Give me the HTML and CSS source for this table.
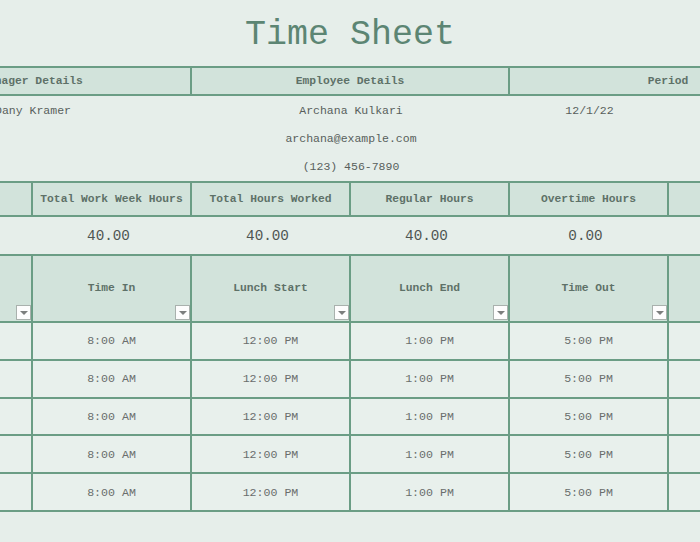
FILE: index.html
```html
<!DOCTYPE html>
<html lang="en">
<head>
<meta charset="utf-8">
<title>Time Sheet</title>
<link rel="stylesheet" href="styles.css">
</head>
<body>
<div class="page">
  <h1 class="title">Time Sheet</h1>
  <div class="sheet">
    <div class="row info-head">
      <div class="cell span2 hd">Manager Details</div>
      <div class="cell span2 hd">Employee Details</div>
      <div class="cell span2 hd last">Period</div>
    </div>
    <div class="row info">
      <div class="cell span2">Dany Kramer</div>
      <div class="cell span2">Archana Kulkari</div>
      <div class="cell">12/1/22</div>
      <div class="cell"></div>
    </div>
    <div class="row info">
      <div class="cell span2"></div>
      <div class="cell span2">archana@example.com</div>
      <div class="cell span2"></div>
    </div>
    <div class="row info">
      <div class="cell span2"></div>
      <div class="cell span2">(123) 456-7890</div>
      <div class="cell span2"></div>
    </div>
    <div class="row sum-head">
      <div class="cell hd"></div>
      <div class="cell hd">Total Work Week Hours</div>
      <div class="cell hd">Total Hours Worked</div>
      <div class="cell hd">Regular Hours</div>
      <div class="cell hd">Overtime Hours</div>
      <div class="cell hd last"></div>
    </div>
    <div class="row sum-vals">
      <div class="cell"></div>
      <div class="cell">40.00</div>
      <div class="cell">40.00</div>
      <div class="cell">40.00</div>
      <div class="cell">0.00</div>
      <div class="cell"></div>
    </div>
    <div class="row tbl-head">
      <div class="cell hd"><span class="dd"></span></div>
      <div class="cell hd">Time In<span class="dd"></span></div>
      <div class="cell hd">Lunch Start<span class="dd"></span></div>
      <div class="cell hd">Lunch End<span class="dd"></span></div>
      <div class="cell hd">Time Out<span class="dd"></span></div>
      <div class="cell hd"><span class="dd"></span></div>
    </div>
    <div class="row data"><div class="cell"></div><div class="cell">8:00 AM</div><div class="cell">12:00 PM</div><div class="cell">1:00 PM</div><div class="cell">5:00 PM</div><div class="cell"></div></div>
    <div class="row data"><div class="cell"></div><div class="cell">8:00 AM</div><div class="cell">12:00 PM</div><div class="cell">1:00 PM</div><div class="cell">5:00 PM</div><div class="cell"></div></div>
    <div class="row data"><div class="cell"></div><div class="cell">8:00 AM</div><div class="cell">12:00 PM</div><div class="cell">1:00 PM</div><div class="cell">5:00 PM</div><div class="cell"></div></div>
    <div class="row data"><div class="cell"></div><div class="cell">8:00 AM</div><div class="cell">12:00 PM</div><div class="cell">1:00 PM</div><div class="cell">5:00 PM</div><div class="cell"></div></div>
    <div class="row data"><div class="cell"></div><div class="cell">8:00 AM</div><div class="cell">12:00 PM</div><div class="cell">1:00 PM</div><div class="cell">5:00 PM</div><div class="cell"></div></div>
  </div>
</div>
</body>
</html>
```

FILE: styles.css
```css
* { box-sizing: border-box; }

html, body {
  margin: 0;
  padding: 0;
  background: #e6eeea;
  overflow: hidden;
}

.page {
  width: 700px;
  height: 542px;
  overflow: hidden;
  font-family: "Liberation Mono", "Courier New", monospace;
  color: #5f6b66;
}

.title {
  margin: 0;
  height: 66px;
  padding-top: 14px;
  text-align: center;
  font-weight: normal;
  font-size: 35px;
  line-height: 42px;
  color: #5c8573;
}

.sheet {
  margin-left: -126px;
  width: 954px;
}

.row {
  display: grid;
  grid-template-columns: repeat(6, 159px);
}

.cell {
  display: flex;
  align-items: center;
  justify-content: center;
  position: relative;
  white-space: nowrap;
  font-size: 11.5px;
}

.span2 { grid-column: span 2; }

.hd {
  background: #d2e3db;
  font-weight: bold;
  font-size: 11.3px;
  color: #5e7168;
  border-right: 2px solid #6b9d85;
}

/* info header */
.info-head {
  border-top: 2px solid #6b9d85;
  border-bottom: 2px solid #6b9d85;
}
.info-head .cell { height: 26px; }

.info .cell {
  height: 28.2px;
  color: #585f5c;
  padding-top: 1px;
}

/* summary header */
.sum-head {
  border-top: 2px solid #6b9d85;
  border-bottom: 2px solid #6b9d85;
}
.sum-head .cell { height: 32.5px; }

.sum-vals .cell {
  height: 37px;
  font-size: 14.3px;
  color: #4f5552;
  padding-right: 8px;
  padding-top: 1px;
}

/* time table */
.tbl-head {
  border-top: 2px solid #6b9d85;
  border-bottom: 2px solid #6b9d85;
}
.tbl-head .cell {
  height: 65px;
  padding-bottom: 2px;
}

.data {
  border-bottom: 2px solid #6b9d85;
}
.data .cell {
  height: 35.8px;
  background: #e8f0ec;
  border-right: 2px solid #6b9d85;
  color: #6a6e6c;
  font-size: 11.6px;
}

.dd {
  position: absolute;
  right: 0;
  bottom: 1px;
  width: 15px;
  height: 15px;
  background: #fdfdfd;
  border: 1px solid #a9b1ad;
}
.dd::after {
  content: "";
  position: absolute;
  left: 3px;
  top: 5px;
  border-left: 4px solid transparent;
  border-right: 4px solid transparent;
  border-top: 4px solid #7c7f7e;
}
```
